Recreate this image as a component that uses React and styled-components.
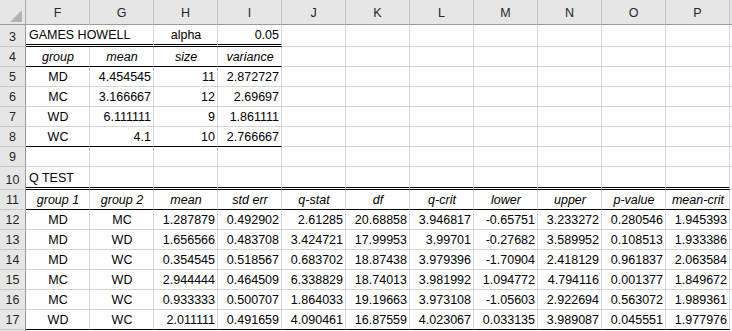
import React from 'react';
import styled, { createGlobalStyle } from 'styled-components';

const GlobalStyle = createGlobalStyle`
  html, body { margin: 0; padding: 0; background: #fff; overflow: hidden; }
  body { font-family: "Liberation Sans", Arial, sans-serif; }
`;

const COLS = ['F', 'G', 'H', 'I', 'J', 'K', 'L', 'M', 'N', 'O', 'P'];

const Sheet = styled.div`
  width: 732px;
  height: 331px;
  overflow: hidden;
  background: #fff;
  font-size: 12.5px;
  color: #000;
`;

const Row = styled.div`
  display: flex;
  height: ${({ $h }) => $h || 20}px;
`;

const Corner = styled.div`
  flex: none;
  width: 26px;
  box-sizing: border-box;
  background: #e6e6e6;
  border-right: 1px solid #ababab;
  border-bottom: 1px solid #9b9b9b;
  display: flex;
  align-items: flex-end;
  justify-content: flex-end;
  padding: 0 3px 2px 0;
`;

const ColHead = styled.div`
  flex: none;
  width: 64px;
  box-sizing: border-box;
  background: #e6e6e6;
  border-right: 1px solid #c6c6c6;
  border-bottom: 1px solid #9b9b9b;
  display: flex;
  align-items: flex-end;
  justify-content: center;
  padding-bottom: 3px;
  font-size: 12.5px;
  line-height: 15px;
  color: #262626;
`;

const RowNum = styled.div`
  flex: none;
  width: 26px;
  box-sizing: border-box;
  background: #e6e6e6;
  border-right: 1px solid #9b9b9b;
  border-bottom: 1px solid #c6c6c6;
  display: flex;
  align-items: flex-end;
  justify-content: center;
  padding-bottom: 1px;
  font-size: 12.5px;
  line-height: 15px;
  color: #262626;
`;

const edgeBorder = {
  double: '3px double #000',
  black: '1px solid #000',
  grid: '1px solid #d4d4d4',
};

const Cell = styled.div`
  flex: none;
  width: ${({ $w }) => $w || 64}px;
  box-sizing: border-box;
  border-right: 1px solid #d4d4d4;
  border-bottom: ${({ $edge }) => edgeBorder[$edge || 'grid']};
  display: flex;
  align-items: flex-end;
  justify-content: ${({ $align }) =>
    $align === 'center' ? 'center' : $align === 'right' ? 'flex-end' : 'flex-start'};
  padding: 0 2px 1px 3px;
  line-height: 15px;
  font-style: ${({ $italic }) => ($italic ? 'italic' : 'normal')};
  white-space: nowrap;
`;

const top = [
  ['MD', '4.454545', '11', '2.872727'],
  ['MC', '3.166667', '12', '2.69697'],
  ['WD', '6.111111', '9', '1.861111'],
  ['WC', '4.1', '10', '2.766667'],
];

const qHeads = ['group 1', 'group 2', 'mean', 'std err', 'q-stat', 'df', 'q-crit', 'lower', 'upper', 'p-value', 'mean-crit'];

const qRows = [
  ['MD', 'MC', '1.287879', '0.492902', '2.61285', '20.68858', '3.946817', '-0.65751', '3.233272', '0.280546', '1.945393'],
  ['MD', 'WD', '1.656566', '0.483708', '3.424721', '17.99953', '3.99701', '-0.27682', '3.589952', '0.108513', '1.933386'],
  ['MD', 'WC', '0.354545', '0.518567', '0.683702', '18.87438', '3.979396', '-1.70904', '2.418129', '0.961837', '2.063584'],
  ['MC', 'WD', '2.944444', '0.464509', '6.338829', '18.74013', '3.981992', '1.094772', '4.794116', '0.001377', '1.849672'],
  ['MC', 'WC', '0.933333', '0.500707', '1.864033', '19.19663', '3.973108', '-1.05603', '2.922694', '0.563072', '1.989361'],
  ['WD', 'WC', '2.011111', '0.491659', '4.090461', '16.87559', '4.023067', '0.033135', '3.989087', '0.045551', '1.977976'],
];

// fills a row out to the 11 visible columns
const pad = (cells, from, edge) => {
  const out = [...cells];
  for (let i = from; i < 11; i++) out.push({ edge });
  return out;
};

const SheetRow = ({ num, h, cells }) => (
  <Row $h={h}>
    <RowNum>{num}</RowNum>
    {cells.map((c, i) => (
      <Cell key={i} $w={c.w} $align={c.align} $italic={c.italic} $edge={c.edge}>
        {c.text}
      </Cell>
    ))}
    <Cell $w={4} />
  </Row>
);

const App = () => {
  const rows = [];

  rows.push(
    <SheetRow
      key={3}
      num={3}
      h={22}
      cells={pad(
        [
          { text: 'GAMES HOWELL', w: 128, edge: 'double' },
          { text: 'alpha', align: 'center', edge: 'double' },
          { text: '0.05', align: 'right', edge: 'double' },
        ],
        4
      )}
    />
  );

  rows.push(
    <SheetRow
      key={4}
      num={4}
      cells={pad(
        ['group', 'mean', 'size', 'variance'].map((t) => ({ text: t, align: 'center', italic: true, edge: 'black' })),
        4
      )}
    />
  );

  top.forEach((r, idx) => {
    const edge = idx === top.length - 1 ? 'black' : undefined;
    rows.push(
      <SheetRow
        key={5 + idx}
        num={5 + idx}
        cells={pad(
          r.map((t, i) => ({ text: t, align: i === 0 ? 'center' : 'right', edge })),
          4
        )}
      />
    );
  });

  rows.push(<SheetRow key={9} num={9} cells={pad([], 0)} />);

  rows.push(
    <SheetRow
      key={10}
      num={10}
      h={23}
      cells={pad([{ text: 'Q TEST', edge: 'double' }], 1, 'double')}
    />
  );

  rows.push(
    <SheetRow
      key={11}
      num={11}
      cells={qHeads.map((t) => ({ text: t, align: 'center', italic: true, edge: 'black' }))}
    />
  );

  qRows.forEach((r, idx) => {
    const edge = idx === qRows.length - 1 ? 'black' : undefined;
    rows.push(
      <SheetRow
        key={12 + idx}
        num={12 + idx}
        cells={r.map((t, i) => ({ text: t, align: i < 2 ? 'center' : 'right', edge }))}
      />
    );
  });

  // only a sliver of the next row shows below the table
  rows.push(<SheetRow key={18} h={20} cells={pad([], 0)} />);

  return (
    <>
      <GlobalStyle />
      <Sheet>
        <Row $h={25}>
          <Corner>
            <svg width="12" height="12" viewBox="0 0 12 12">
              <polygon points="12,0 12,12 0,12" fill="#b4b4b4" />
            </svg>
          </Corner>
          {COLS.map((c) => (
            <ColHead key={c}>{c}</ColHead>
          ))}
          <ColHead style={{ width: 4 }} />
        </Row>
        {rows}
      </Sheet>
    </>
  );
};

export default App;
